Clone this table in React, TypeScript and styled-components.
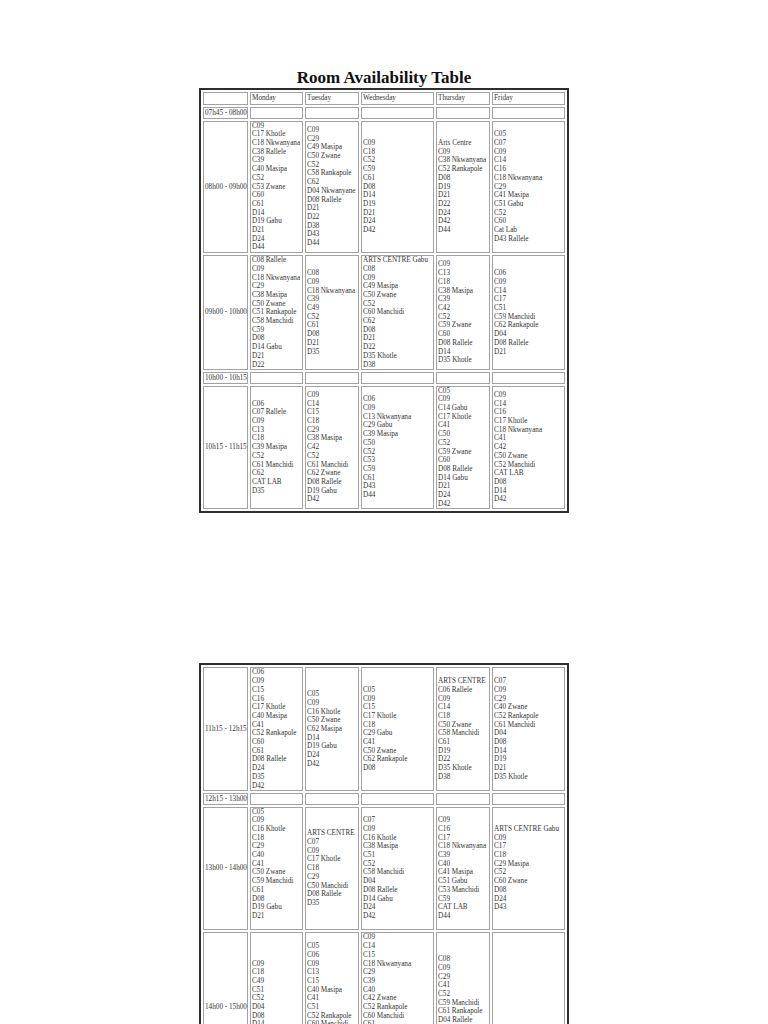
import React from "react";
import styled, { createGlobalStyle, css } from "styled-components";

const GlobalStyle = createGlobalStyle`
  html, body { margin: 0; padding: 0; background: #ffffff; }
  body {
    font-family: "Liberation Serif", "Times New Roman", serif;
    color: #333333;
  }
`;

const Document = styled.main`
  display: flex;
  flex-direction: column;
  align-items: center;
  width: 768px;
`;

const Sheet = styled.section<{ $gap: number }>`
  display: flex;
  flex-direction: column;
  align-items: center;
  padding-top: ${(p) => p.$gap}px;
`;

const Title = styled.h1`
  margin: 0;
  font-family: "Liberation Serif", "Times New Roman", serif;
  font-size: 17px;
  line-height: 20px;
  font-weight: 700;
  color: #111111;
`;

const Table = styled.table`
  box-sizing: border-box;
  width: 370px;
  table-layout: fixed;
  border-collapse: separate;
  border-spacing: 2px;
  border: 2px solid #2e2e2e;
  font-size: 7.2px;
  line-height: 8.7px;
`;

const Col = styled.col<{ $w: number }>`
  width: ${(p) => p.$w}px;
`;

const Row = styled.tr<{ $h?: number }>`
  height: ${(p) => (p.$h ? `${p.$h}px` : "auto")};
`;

const cellBase = css`
  border: 1px solid #a2a2a2;
  padding: 0 1px;
  vertical-align: middle;
  text-align: left;
  white-space: nowrap;
  color: #333333;
`;

const HeadCell = styled.th`
  ${cellBase};
  font-weight: 400;
`;

const TimeCell = styled.td`
  ${cellBase};
  padding: 0 0 0 1px;
`;

const RoomCell = styled.td`
  ${cellBase};
`;

const Entry = styled.span`
  display: block;
`;

type Slot = { time: string; rooms: string[][] | null };

const DAYS = ["Monday", "Tuesday", "Wednesday", "Thursday", "Friday"];
const WIDTHS = [45, 53, 54, 73, 54, 73];

const PAGE1: Slot[] = [
  { time: "07h45 - 08h00", rooms: null },
  {
    time: "08h00 - 09h00",
    rooms: [
      ["C09", "C17 Khotle", "C18 Nkwanyana", "C38 Rallele", "C39", "C40 Masipa", "C52", "C53 Zwane", "C60", "C61", "D14", "D19 Gabu", "D21", "D24", "D44"],
      ["C09", "C29", "C49 Masipa", "C50 Zwane", "C52", "C58 Rankapole", "C62", "D04 Nkwanyane", "D08 Rallele", "D21", "D22", "D38", "D43", "D44"],
      ["C09", "C18", "C52", "C59", "C61", "D08", "D14", "D19", "D21", "D24", "D42"],
      ["Arts Centre", "C09", "C38 Nkwanyana", "C52 Rankapole", "D08", "D19", "D21", "D22", "D24", "D42", "D44"],
      ["C05", "C07", "C09", "C14", "C16", "C18 Nkwanyana", "C29", "C41 Masipa", "C51 Gabu", "C52", "C60", "Cat Lab", "D43 Rallele"],
    ],
  },
  {
    time: "09h00 - 10h00",
    rooms: [
      ["C08 Rallele", "C09", "C18 Nkwanyana", "C29", "C38 Masipa", "C50 Zwane", "C51 Rankapole", "C58 Manchidi", "C59", "D08", "D14 Gabu", "D21", "D22"],
      ["C08", "C09", "C18 Nkwanyana", "C39", "C49", "C52", "C61", "D08", "D21", "D35"],
      ["ARTS CENTRE Gabu", "C08", "C09", "C49 Masipa", "C50 Zwane", "C52", "C60 Manchidi", "C62", "D08", "D21", "D22", "D35 Khotle", "D38"],
      ["C09", "C13", "C18", "C38 Masipa", "C39", "C42", "C52", "C59 Zwane", "C60", "D08 Rallele", "D14", "D35 Khotle"],
      ["C06", "C09", "C14", "C17", "C51", "C59 Manchidi", "C62 Rankapole", "D04", "D08 Rallele", "D21"],
    ],
  },
  { time: "10h00 - 10h15", rooms: null },
  {
    time: "10h15 - 11h15",
    rooms: [
      ["C06", "C07 Rallele", "C09", "C13", "C18", "C39 Masipa", "C52", "C61 Manchidi", "C62", "CAT LAB", "D35"],
      ["C09", "C14", "C15", "C18", "C29", "C38 Masipa", "C42", "C52", "C61 Manchidi", "C62 Zwane", "D08 Rallele", "D19 Gabu", "D42"],
      ["C06", "C09", "C13 Nkwanyana", "C29 Gabu", "C39 Masipa", "C50", "C52", "C53", "C59", "C61", "D43", "D44"],
      ["C05", "C09", "C14 Gabu", "C17 Khotle", "C41", "C50", "C52", "C59 Zwane", "C60", "D08 Rallele", "D14 Gabu", "D21", "D24", "D42"],
      ["C09", "C14", "C16", "C17 Khotle", "C18 Nkwanyana", "C41", "C42", "C50 Zwane", "C52 Manchidi", "CAT LAB", "D08", "D14", "D42"],
    ],
  },
];

const PAGE2: Slot[] = [
  {
    time: "11h15 - 12h15",
    rooms: [
      ["C06", "C09", "C15", "C16", "C17 Khotle", "C40 Masipa", "C41", "C52 Rankapole", "C60", "C61", "D08 Rallele", "D24", "D35", "D42"],
      ["C05", "C09", "C16 Khotle", "C50 Zwane", "C62 Masipa", "D14", "D19 Gabu", "D24", "D42"],
      ["C05", "C09", "C15", "C17 Khotle", "C18", "C29 Gabu", "C41", "C50 Zwane", "C62 Rankapole", "D08"],
      ["ARTS CENTRE", "C06 Rallele", "C09", "C14", "C18", "C50 Zwane", "C58 Manchidi", "C61", "D19", "D22", "D35 Khotle", "D38"],
      ["C07", "C09", "C29", "C40 Zwane", "C52 Rankapole", "C61 Manchidi", "D04", "D08", "D14", "D19", "D21", "D35 Khotle"],
    ],
  },
  { time: "12h15 - 13h00", rooms: null },
  {
    time: "13h00 - 14h00",
    rooms: [
      ["C05", "C09", "C16 Khotle", "C18", "C29", "C40", "C41", "C50 Zwane", "C59 Manchidi", "C61", "D08", "D19 Gabu", "D21", "\u00a0"],
      ["ARTS CENTRE", "C07", "C09", "C17 Khotle", "C18", "C29", "C50 Manchidi", "D08 Rallele", "D35"],
      ["C07", "C09", "C16 Khotle", "C38 Masipa", "C51", "C52", "C58 Manchidi", "D04", "D08 Rallele", "D14 Gabu", "D24", "D42"],
      ["C09", "C16", "C17", "C18 Nkwanyana", "C39", "C40", "C41 Masipa", "C51 Gabu", "C53 Manchidi", "C59", "CAT LAB", "D44"],
      ["ARTS CENTRE Gabu", "C09", "C17", "C18", "C29 Masipa", "C52", "C60 Zwane", "D08", "D24", "D43"],
    ],
  },
  {
    time: "14h00 - 15h00",
    rooms: [
      ["C09", "C18", "C49", "C51", "C52", "D04", "D08", "D14", "D21", "D35", "D42"],
      ["C05", "C06", "C09", "C13", "C15", "C40 Masipa", "C41", "C51", "C52 Rankapole", "C60 Manchidi", "C62", "D08 Rallele", "D19", "D24", "D44"],
      ["C09", "C14", "C15", "C18 Nkwanyana", "C29", "C39", "C40", "C42 Zwane", "C52 Rankapole", "C60 Manchidi", "C61", "D08", "D14 Gabu", "D19", "D21", "D24", "D42"],
      ["C08", "C09", "C29", "C41", "C52", "C59 Manchidi", "C61 Rankapole", "D04 Rallele", "D14", "D21", "D24", "D42"],
      [],
    ],
  },
];

function SlotRow({ slot }: { slot: Slot }) {
  if (!slot.rooms) {
    return (
      <Row $h={11.3}>
        <TimeCell>{slot.time}</TimeCell>
        {DAYS.map((d) => (
          <RoomCell key={d} />
        ))}
      </Row>
    );
  }
  return (
    <Row>
      <TimeCell>{slot.time}</TimeCell>
      {slot.rooms.map((list, i) => (
        <RoomCell key={DAYS[i]}>
          {list.map((r, j) => (
            <Entry key={j}>{r}</Entry>
          ))}
        </RoomCell>
      ))}
    </Row>
  );
}

function Timetable({ slots, withHeader }: { slots: Slot[]; withHeader: boolean }) {
  return (
    <Table>
      <colgroup>
        {WIDTHS.map((w, i) => (
          <Col key={i} $w={w} />
        ))}
      </colgroup>
      <tbody>
        {withHeader && (
          <Row $h={13.3}>
            <HeadCell />
            {DAYS.map((d) => (
              <HeadCell key={d}>{d}</HeadCell>
            ))}
          </Row>
        )}
        {slots.map((s) => (
          <SlotRow key={s.time} slot={s} />
        ))}
      </tbody>
    </Table>
  );
}

export default function App() {
  return (
    <>
      <GlobalStyle />
      <Document>
        <Sheet $gap={68}>
          <Title>Room Availability Table</Title>
          <Timetable slots={PAGE1} withHeader />
        </Sheet>
        <Sheet $gap={150}>
          <Timetable slots={PAGE2} withHeader={false} />
        </Sheet>
      </Document>
    </>
  );
}
